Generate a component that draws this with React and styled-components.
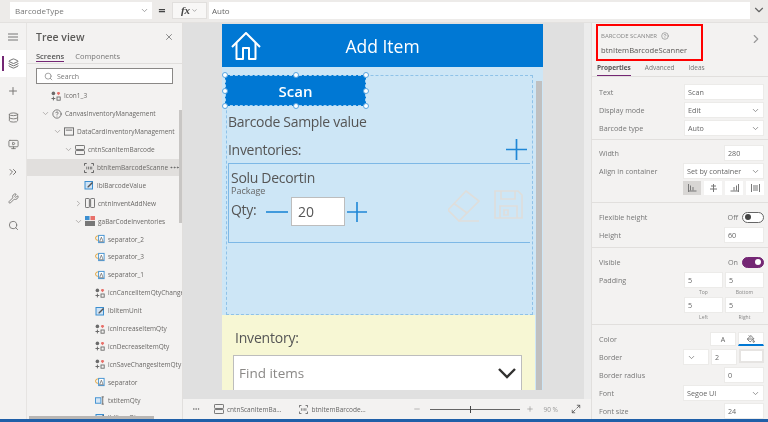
import React from 'react'
import styled, { createGlobalStyle } from 'styled-components'
import { Plus, Minus, X, ChevronDown, ChevronRight, Search, Database, Layers, CircleHelp, MoreHorizontal, Maximize2, Wrench, ChevronsRight, MonitorPlay, PaintBucket } from 'lucide-react'

const Global = createGlobalStyle`
    html, body { margin: 0; padding: 0; background: #f3f2f1; overflow: hidden; }
    * { box-sizing: border-box; }
`

const Page = styled.div`
    width: 768px;
    height: 422px;
    display: flex;
    flex-direction: column;
    overflow: hidden;
    font-family: "Open Sans", "Noto Sans", sans-serif;
    color: #605e5c;
    background: #f3f2f1;
    filter: blur(0.35px);
`

// FORMULA BAR
const TopBar = styled.div`
    height: 23px;
    flex: none;
    display: flex;
    align-items: center;
    padding: 0 0 2px 10px;
    background: #edebe9;
    border-bottom: 1px solid #e3e1df;
`
const PropSelect = styled.div`
    width: 142px;
    height: 17px;
    display: flex;
    align-items: center;
    justify-content: space-between;
    padding: 0 3px 0 5px;
    background: #fff;
    font-size: 8px;
    color: #777;
`
const Equals = styled.div`
    width: 20px;
    text-align: center;
    font-size: 13px;
    font-weight: 600;
    color: #444;
`
const FxBox = styled.div`
    width: 35px;
    height: 17px;
    display: flex;
    align-items: center;
    justify-content: center;
    gap: 1px;
    background: #f8f7f6;
    border: 1px solid #e1dfdd;
    font-family: "Liberation Serif", serif;
    font-style: italic;
    font-weight: 700;
    font-size: 11px;
    color: #444;
`
const FormulaInput = styled.div`
    width: 541px;
    height: 17px;
    margin-left: 2px;
    display: flex;
    align-items: center;
    padding-left: 3px;
    background: #fff;
    font-size: 8px;
    color: #666;
`
const BarChevron = styled.div`
    flex: 1;
    display: flex;
    justify-content: center;
    color: #666;
`

const Main = styled.div`
    flex: 1;
    min-height: 0;
    display: flex;
`

// LEFT RAIL
const Rail = styled.div`
    width: 27px;
    flex: none;
    display: flex;
    flex-direction: column;
    background: #f3f2f1;
    border-right: 1px solid #e6e4e2;
`
const RailItem = styled.div`
    position: relative;
    height: 27px;
    display: flex;
    align-items: center;
    justify-content: center;
    color: #7a7876;
    background: ${p => (p.$active ? '#fff' : 'transparent')};
    &::before {
        content: '';
        display: ${p => (p.$active ? 'block' : 'none')};
        position: absolute;
        left: 2px;
        top: 6px;
        bottom: 6px;
        width: 2px;
        background: #742774;
    }
`

// TREE VIEW
const TreePanel = styled.div`
    position: relative;
    width: 156px;
    flex: none;
    display: flex;
    flex-direction: column;
    overflow: hidden;
    background: #f3f2f1;
    border-right: 1px solid #e1dfdd;
`
const TreeHead = styled.div`
    height: 24px;
    flex: none;
    display: flex;
    align-items: center;
    justify-content: space-between;
    padding: 4px 8px 0 9px;
    font-size: 10.5px;
    font-weight: 600;
    color: #5b5a58;
`
const TreeTabs = styled.div`
    height: 17px;
    flex: none;
    display: flex;
    gap: 11px;
    padding: 2px 0 0 9px;
    border-bottom: 1px solid #e1dfdd;
`
const TreeTab = styled.div`
    height: 13px;
    font-size: 7.5px;
    line-height: 14px;
    font-weight: ${p => (p.$active ? 600 : 400)};
    color: ${p => (p.$active ? '#555' : '#777')};
    border-bottom: ${p => (p.$active ? '1px solid #742774' : 'none')};
`
const SearchBox = styled.div`
    height: 16px;
    flex: none;
    margin: 4px 9px 3px 9px;
    display: flex;
    align-items: center;
    gap: 4px;
    padding-left: 7px;
    background: #fff;
    border: 1px solid #8a8886;
    font-size: 7px;
    color: #777;
`
const TreeList = styled.div`
    flex: 1;
    min-height: 0;
    overflow: hidden;
`
const TreeRow = styled.div`
    position: relative;
    height: 17.9px;
    display: flex;
    align-items: center;
    gap: 3px;
    padding-left: ${p => p.$indent}px;
    font-size: 6.5px;
    white-space: nowrap;
    color: #6a6866;
    background: ${p => (p.$selected ? '#e1dfdd' : 'transparent')};
    svg { flex: none; }
`
const Caret = styled.span`
    width: 8px;
    flex: none;
    display: flex;
    color: #a09e9c;
`
const RowDots = styled.span`
    position: absolute;
    right: 2px;
    top: 3px;
    padding-left: 1px;
    display: flex;
    color: #666;
    background: #e1dfdd;
`
const VScroll = styled.div`
    position: absolute;
    right: 0;
    top: 87px;
    width: 3px;
    height: 113px;
    background: #c8c6c4;
`
const HScroll = styled.div`
    position: absolute;
    left: 2px;
    bottom: 0;
    width: 125px;
    height: 3px;
    background: #b8b6b4;
`

// CENTER
const Center = styled.div`
    flex: 1;
    min-width: 0;
    display: flex;
    flex-direction: column;
`
const CanvasArea = styled.div`
    position: relative;
    flex: 1;
    min-height: 0;
    overflow: hidden;
    padding: 1px 0 0 39px;
    background: #e0e0e0;
    border-right: 7px solid #ececec;
`
const Screen = styled.div`
    width: 321px;
    height: 366px;
    display: flex;
    flex-direction: column;
`
const AppHeader = styled.div`
    position: relative;
    height: 43px;
    flex: none;
    display: flex;
    align-items: center;
    justify-content: center;
    background: #0078d4;
    color: #fff;
    font-size: 17.5px;
`
const HomeIcon = styled.svg`
    position: absolute;
    left: 9px;
    top: 8px;
`
const AppBody = styled.div`
    flex: 1;
    min-height: 0;
    display: flex;
    width: 100%;
`
const AppColumn = styled.div`
    width: 313px;
    display: flex;
    flex-direction: column;
`
const BlueArea = styled.div`
    height: 248px;
    flex: none;
    padding: 8px 2px 0 4px;
    background: #cde6f6;
`
const Container = styled.div`
    height: 100%;
    display: flex;
    flex-direction: column;
    border: 1px dashed #8fc2e8;
`
const ScanWrap = styled.div`
    position: relative;
    width: 141px;
    height: 31px;
    margin-left: -2px;
    margin-top: -1px;
    flex: none;
`
const ScanButton = styled.div`
    height: 100%;
    display: flex;
    align-items: center;
    justify-content: center;
    background: #0078d4;
    border: 1px dashed #a9d3f2;
    color: #fff;
    font-size: 15px;
    font-weight: 600;
`
const Handle = styled.span`
    position: absolute;
    left: ${p => p.$x}%;
    top: ${p => p.$y}%;
    width: 6px;
    height: 6px;
    margin: -3px 0 0 -3px;
    border-radius: 50%;
    background: #fff;
    border: 1px solid #5aa5e0;
`
const SampleText = styled.div`
    margin: 6px 0 0 1px;
    font-size: 14px;
    letter-spacing: -0.3px;
    line-height: 20px;
    color: #555;
`
const InventHead = styled.div`
    height: 28px;
    flex: none;
    margin-top: 3px;
    display: flex;
    align-items: center;
    justify-content: space-between;
    padding: 0 5px 0 1px;
    font-size: 14px;
    letter-spacing: -0.3px;
    color: #555;
`
const Gallery = styled.div`
    position: relative;
    height: 80px;
    flex: none;
    margin: 0 2px 0 1px;
    padding: 6px 0 0 2px;
    border-top: 1px solid #7db8e6;
    border-left: 1px solid #7db8e6;
    border-bottom: 1px solid #7db8e6;
`
const ItemName = styled.div`
    font-size: 14px;
    letter-spacing: -0.3px;
    line-height: 15px;
    color: #555;
`
const ItemUnit = styled.div`
    margin-top: 1px;
    font-size: 9px;
    line-height: 9px;
    color: #666;
`
const QtyRow = styled.div`
    display: flex;
    align-items: center;
    margin-top: 2px;
`
const QtyLabel = styled.span`
    width: 35px;
    font-size: 14px;
    letter-spacing: -0.3px;
    padding-bottom: 4px;
    color: #555;
`
const QtyInput = styled.div`
    width: 54px;
    height: 29px;
    margin: 0 2px 0 3px;
    display: flex;
    align-items: center;
    padding-left: 6px;
    background: #fff;
    border: 1px solid #bdbdbd;
    font-size: 14px;
    color: #555;
`
const FadedIcons = styled.div`
    position: absolute;
    right: 7px;
    top: 26px;
    display: flex;
    align-items: flex-start;
    gap: 14px;
    color: #dfdedb;
`
const YellowArea = styled.div`
    flex: 1;
    min-height: 0;
    overflow: hidden;
    padding: 13px 13px 0 11px;
    background: #f7f7d4;
`
const InventoryLabel = styled.div`
    padding-left: 2px;
    font-size: 14px;
    letter-spacing: -0.2px;
    line-height: 20px;
    color: #555;
`
const FindBox = styled.div`
    height: 36px;
    margin-top: 7px;
    display: flex;
    align-items: center;
    justify-content: space-between;
    padding: 0 3px 0 5px;
    background: #fff;
    border: 1px solid #bdbdbd;
    font-size: 13.5px;
    color: #8a8886;
`
const ScreenScroll = styled.div`
    width: 8px;
    display: flex;
    flex-direction: column;
    padding: 8px 1px 0;
    background: #cde6f6;
`
const ScrollThumb = styled.div`
    flex: 1;
    background: #c0c0c0;
    margin-top: 6px;
`
const OuterScroll = styled.div`
    position: absolute;
    right: -6px;
    top: 2px;
    bottom: 2px;
    display: flex;
    flex-direction: column;
    justify-content: space-between;
    font-size: 5px;
    color: #555;
`

// STATUS BAR
const StatusBar = styled.div`
    height: 20px;
    flex: none;
    display: flex;
    align-items: center;
    padding-left: 9px;
    background: #f3f2f1;
    font-size: 6.5px;
    color: #666;
`
const Crumb = styled.div`
    display: flex;
    align-items: center;
    gap: 3px;
    margin-left: ${p => p.$gap}px;
    white-space: nowrap;
`
const ZoomGroup = styled.div`
    margin-left: auto;
    display: flex;
    align-items: center;
    padding-right: 10px;
    color: #999;
`
const SliderTrack = styled.div`
    position: relative;
    width: 90px;
    height: 1px;
    margin: 0 6px 0 9px;
    background: #666;
    &::after {
        content: '';
        position: absolute;
        left: 40px;
        top: -3px;
        width: 1px;
        height: 7px;
        background: #444;
    }
`
const ZoomText = styled.span`
    margin: 0 13px 0 10px;
    font-size: 6.5px;
`
const TaskStrip = styled.div`
    height: 3px;
    flex: none;
    background: #1f5fa8;
`

// PROPERTIES
const PropsPanel = styled.div`
    width: 177px;
    flex: none;
    display: flex;
    flex-direction: column;
    overflow: hidden;
    background: #f3f2f1;
    border-left: 1px solid #e1dfdd;
`
const PropsHead = styled.div`
    position: relative;
    height: 40px;
    flex: none;
    padding: 1px 0 0 4px;
`
const RedBox = styled.div`
    width: 107px;
    height: 37px;
    padding: 5px 0 0 3px;
    border: 2px solid #f00;
`
const TypeLine = styled.div`
    display: flex;
    align-items: center;
    gap: 4px;
    font-size: 6px;
    line-height: 10px;
    color: #888;
`
const NameLine = styled.div`
    margin-top: 4px;
    font-size: 7.6px;
    line-height: 10px;
    color: #5a5856;
`
const HeadChevron = styled(ChevronRight)`
    position: absolute;
    right: 5px;
    top: 9px;
    color: #999;
`
const PropTabs = styled.div`
    height: 14px;
    flex: none;
    display: flex;
    gap: 14px;
    padding-left: 5px;
    border-bottom: 1px solid #e1dfdd;
`
const PropTab = styled.div`
    height: 13px;
    font-size: 6.5px;
    line-height: 10px;
    font-weight: ${p => (p.$active ? 700 : 400)};
    color: ${p => (p.$active ? '#555' : '#777')};
    border-bottom: ${p => (p.$active ? '1px solid #742774' : 'none')};
`
const Section = styled.div`
    flex: none;
    height: ${p => p.$height}px;
    padding: ${p => p.$top}px 4px 0 7px;
    border-bottom: ${p => (p.$last ? 'none' : '1px solid #e1dfdd')};
`
const Row = styled.div`
    height: 18px;
    display: flex;
    align-items: center;
    justify-content: space-between;
    font-size: 7.2px;
    color: #777;
`
const Field = styled.div`
    width: ${p => p.$w}px;
    height: 16px;
    display: flex;
    align-items: center;
    justify-content: space-between;
    padding: 0 3px 0 3px;
    background: #fff;
    border: 1px solid #ecebe9;
    font-size: 7.2px;
    color: #666;
`
const Fields = styled.div`
    display: flex;
    gap: 2px;
`
const AlignRow = styled.div`
    display: flex;
    justify-content: flex-end;
    gap: 3px;
    padding-top: 1px;
`
const AlignButton = styled.div`
    width: 18px;
    height: 14px;
    display: flex;
    align-items: center;
    justify-content: center;
    background: ${p => (p.$active ? '#d8d6d4' : '#fff')};
    color: #777;
`
const Toggle = styled.div`
    width: 22px;
    height: 11px;
    padding: 1px 2px;
    display: flex;
    justify-content: ${p => (p.$on ? 'flex-end' : 'flex-start')};
    align-items: center;
    border-radius: 6px;
    background: ${p => (p.$on ? '#742774' : '#fff')};
    border: 1px solid ${p => (p.$on ? '#742774' : '#666')};
    &::after {
        content: '';
        width: 6px;
        height: 6px;
        border-radius: 50%;
        background: ${p => (p.$on ? '#fff' : '#444')};
    }
`
const ToggleSet = styled.div`
    display: flex;
    align-items: center;
    gap: 4px;
`
const SmallCaps = styled.div`
    height: ${p => p.$h}px;
    display: flex;
    justify-content: flex-end;
    gap: 2px;
    font-size: 5px;
    line-height: 7px;
    color: #888;
`
const SmallCap = styled.span`
    width: 39px;
    text-align: center;
`
const ColorCell = styled.div`
    width: 26px;
    height: 14px;
    display: flex;
    flex-direction: column;
    align-items: center;
    justify-content: center;
    background: #fff;
    border: 1px solid #ecebe9;
    font-size: 7px;
    color: #666;
    border-bottom: ${p => (p.$bar ? '2px solid #0078d4' : '1px solid #ecebe9')};
`
const Swatch = styled.div`
    width: 25px;
    height: 14px;
    background: #fff;
    border: 2px solid #e6e4e2;
`

// DRAWINGS
const LinePlus = ({ size }) => (
    <svg width={size} height={size} viewBox="0 0 20 20" fill="none" stroke="#1f87d6" strokeWidth="1.6" style={{ flex: 'none' }}>
        <path d="M10 0v20M0 10h20" />
    </svg>
)
const LineMinus = () => (
    <svg width="22" height="4" viewBox="0 0 22 4" stroke="#1f87d6" strokeWidth="1.6" style={{ flex: 'none' }}>
        <path d="M0 2h22" />
    </svg>
)
const EraserIcon = () => (
    <svg width="32" height="32" viewBox="0 0 32 32" fill="none" stroke="currentColor" strokeWidth="1.6">
        <path d="M18 1 31 11 11 31 0 20z" />
        <path d="M6 13.5 19 23M11 31h20" />
    </svg>
)
const SaveIcon = () => (
    <svg width="29" height="29" viewBox="0 0 29 29" fill="none" stroke="currentColor" strokeWidth="1.6">
        <path d="M1 1h23l4 4v23H1z" />
        <path d="M7 1v8h14V1M6 28V16h17v12M10 20h4v5h-4z" />
    </svg>
)
const ChevronBig = () => (
    <svg width="18" height="11" viewBox="0 0 18 11" fill="none" stroke="#323130" strokeWidth="2.4" style={{ marginRight: 2 }}>
        <path d="M1 1l8 8 8-8" />
    </svg>
)
const AlignIcon = ({ d }) => (
    <svg width="9" height="8" viewBox="0 0 9 8" fill="none" stroke="#777">
        <path d={d} />
    </svg>
)
const IconGrid = () => (
    <svg width="10" height="10" viewBox="0 0 10 10" fill="none">
        <circle cx="2.4" cy="2.4" r="1.8" fill="#6b6b6b" />
        <path d="M7.5 4.2 5.8 2.4 6.6 .9h1.8l.8 1.5z" fill="#e8706a" />
        <path d="M2.4 5.6v3.8M.5 7.5h3.8" stroke="#6b6b6b" strokeWidth="1" />
        <rect x="6" y="6" width="3.2" height="3.2" stroke="#6b6b6b" strokeWidth=".9" />
    </svg>
)
const LabelIcon = () => (
    <svg width="10" height="10" viewBox="0 0 10 10" fill="none">
        <rect x="1" y="1.5" width="7.5" height="7.5" fill="#cfe3f5" stroke="#3b8ed0" />
        <path d="M3.5 6.5 8 2l1 1-4.5 4.5H3.5z" fill="#555" />
    </svg>
)
const ShapeIcon = () => (
    <svg width="10" height="10" viewBox="0 0 11 10" fill="none">
        <circle cx="3" cy="4" r="2.4" stroke="#e0a030" />
        <rect x="4" y="1" width="6" height="8" fill="#fff" stroke="#3b8ed0" />
        <path d="M7 3 5 8h4z" stroke="#666" strokeWidth=".8" />
    </svg>
)
const ScanIcon = ({ size = 10 }) => (
    <svg width={size} height={size} viewBox="0 0 11 11" fill="none" stroke="#555">
        <path d="M.5 3V.5H3M8 .5h2.5V3M.5 8v2.5H3M8 10.5h2.5V8" />
        <path d="M3 4v3M5 4v3M7 4v3M8.5 4v3" strokeWidth=".8" />
    </svg>
)
const StackIcon = ({ size = 10 }) => (
    <svg width={size} height={size} viewBox="0 0 11 11" fill="none" stroke="#666">
        <rect x=".5" y=".5" width="10" height="4.4" rx=".8" />
        <rect x=".5" y="6.1" width="10" height="4.4" rx=".8" />
    </svg>
)
const ColumnsIcon = () => (
    <svg width="10" height="10" viewBox="0 0 11 11" fill="none" stroke="#666">
        <rect x=".5" y=".5" width="4.3" height="10" rx=".8" />
        <rect x="6.2" y=".5" width="4.3" height="10" rx=".8" />
    </svg>
)
const GalleryIcon = () => (
    <svg width="10" height="10" viewBox="0 0 11 11">
        <rect x="0" y="0" width="5" height="4.5" fill="#3b8ed0" />
        <rect x="6" y="0" width="5" height="4.5" fill="#e8706a" />
        <rect x="0" y="5.5" width="11" height="5.5" fill="#777" />
    </svg>
)
const CardIcon = () => (
    <svg width="10" height="9" viewBox="0 0 11 9" fill="none" stroke="#666">
        <rect x=".5" y=".5" width="10" height="8" />
        <path d="M2 3h7" />
    </svg>
)
const TextInputIcon = () => (
    <svg width="10" height="9" viewBox="0 0 11 9" fill="none" stroke="#666">
        <rect x=".5" y="1.5" width="6" height="6" fill="#d5e6f5" stroke="#3b8ed0" />
        <path d="M8.5.5v8M7.3.5h2.4M7.3 8.5h2.4" />
    </svg>
)

const treeRows = [
    { name: 'Icon1_3', indent: 24, icon: <IconGrid /> },
    { name: 'CanvasInventoryManagement', indent: 14, caret: 'down', icon: <CircleHelp size={10} color="#666" /> },
    { name: 'DataCardInventoryManagement', indent: 26, caret: 'down', icon: <CardIcon /> },
    { name: 'cntnScanItemBarcode', indent: 37, caret: 'down', icon: <StackIcon /> },
    { name: 'btnItemBarcodeScanne', indent: 57, icon: <ScanIcon />, selected: true },
    { name: 'lblBarcodeValue', indent: 57, icon: <LabelIcon /> },
    { name: 'cntnInventAddNew', indent: 47, caret: 'right', icon: <ColumnsIcon /> },
    { name: 'gaBarCodeInventories', indent: 47, caret: 'down', icon: <GalleryIcon /> },
    { name: 'separator_2', indent: 68, icon: <ShapeIcon /> },
    { name: 'separator_3', indent: 68, icon: <ShapeIcon /> },
    { name: 'separator_1', indent: 68, icon: <ShapeIcon /> },
    { name: 'icnCancelItemQtyChange', indent: 68, icon: <IconGrid /> },
    { name: 'lblItemUnit', indent: 68, icon: <LabelIcon /> },
    { name: 'icnIncreaseItemQty', indent: 68, icon: <IconGrid /> },
    { name: 'icnDecreaseItemQty', indent: 68, icon: <IconGrid /> },
    { name: 'icnSaveChangesItemQty', indent: 68, icon: <IconGrid /> },
    { name: 'separator', indent: 68, icon: <ShapeIcon /> },
    { name: 'txtItemQty', indent: 68, icon: <TextInputIcon /> },
    { name: 'lblItemQty', indent: 68, icon: <LabelIcon /> },
]

const handles = [[0, 0], [50, 0], [100, 0], [0, 50], [100, 50], [0, 100], [50, 100], [100, 100]]

const alignIcons = [
    'M.5 0v8M2.5 1.5v5M5 3v3.5M.5 7h8',
    'M4.5 0v8M2 2h5M1 5h7',
    'M8.5 0v8M6.5 1.5v5M4 3v3.5M.5 7h8',
    'M.5 0v8M8.5 0v8M2 2h5M2 4h5M2 6h5',
]

const TreeItem = ({ row }) => (
    <TreeRow $indent={row.indent} $selected={row.selected}>
        {row.caret && (
            <Caret>
                {row.caret === 'down' ? <ChevronDown size={9} /> : <ChevronRight size={9} />}
            </Caret>
        )}
        {row.icon}
        <span>{row.name}</span>
        {row.selected && <RowDots><MoreHorizontal size={11} /></RowDots>}
    </TreeRow>
)

const SelectField = ({ w, children }) => (
    <Field $w={w}>
        {children}
        <ChevronDown size={9} color="#777" />
    </Field>
)

const App = () => {
    return (
        <Page>
            <Global />
            <TopBar>
                <PropSelect>BarcodeType<ChevronDown size={9} color="#888" /></PropSelect>
                <Equals>=</Equals>
                <FxBox>fx<ChevronDown size={7} color="#777" /></FxBox>
                <FormulaInput>Auto</FormulaInput>
                <BarChevron><ChevronDown size={14} /></BarChevron>
            </TopBar>
            <Main>
                <Rail>
                    <RailItem>
                        <svg width="10" height="8" viewBox="0 0 10 8" stroke="#777"><path d="M0 1h10M0 4h10M0 7h10" /></svg>
                    </RailItem>
                    <RailItem $active><Layers size={11} color="#666" /></RailItem>
                    <RailItem><Plus size={12} /></RailItem>
                    <RailItem><Database size={11} /></RailItem>
                    <RailItem><MonitorPlay size={11} /></RailItem>
                    <RailItem><ChevronsRight size={12} /></RailItem>
                    <RailItem><Wrench size={11} /></RailItem>
                    <RailItem><Search size={11} /></RailItem>
                </Rail>
                <TreePanel>
                    <TreeHead>Tree view<X size={10} color="#777" /></TreeHead>
                    <TreeTabs>
                        <TreeTab $active>Screens</TreeTab>
                        <TreeTab>Components</TreeTab>
                    </TreeTabs>
                    <SearchBox><Search size={9} color="#888" />Search</SearchBox>
                    <TreeList>
                        {treeRows.map(row => <TreeItem key={row.name} row={row} />)}
                    </TreeList>
                    <VScroll />
                    <HScroll />
                </TreePanel>
                <Center>
                    <CanvasArea>
                        <Screen>
                            <AppHeader>
                                <HomeIcon width="30" height="28" viewBox="0 0 30 28" fill="none" stroke="#fff" strokeWidth="2" strokeLinejoin="round">
                                    <path d="M1 15 15 1l14 14" />
                                    <path d="M5.5 11v16H12V16h6v11h6.5V11" />
                                </HomeIcon>
                                Add Item
                            </AppHeader>
                            <AppBody>
                                <AppColumn>
                                    <BlueArea>
                                        <Container>
                                            <ScanWrap>
                                                <ScanButton>Scan</ScanButton>
                                                {handles.map(([x, y]) => <Handle key={`${x}-${y}`} $x={x} $y={y} />)}
                                            </ScanWrap>
                                            <SampleText>Barcode Sample value</SampleText>
                                            <InventHead>
                                                Inventories:
                                                <LinePlus size={21} />
                                            </InventHead>
                                            <Gallery>
                                                <ItemName>Solu Decortin</ItemName>
                                                <ItemUnit>Package</ItemUnit>
                                                <QtyRow>
                                                    <QtyLabel>Qty:</QtyLabel>
                                                    <LineMinus />
                                                    <QtyInput>20</QtyInput>
                                                    <LinePlus size={20} />
                                                </QtyRow>
                                                <FadedIcons>
                                                    <EraserIcon />
                                                    <SaveIcon />
                                                </FadedIcons>
                                            </Gallery>
                                        </Container>
                                    </BlueArea>
                                    <YellowArea>
                                        <InventoryLabel>Inventory:</InventoryLabel>
                                        <FindBox>
                                            Find items
                                            <ChevronBig />
                                        </FindBox>
                                    </YellowArea>
                                </AppColumn>
                                <ScreenScroll><ScrollThumb /></ScreenScroll>
                            </AppBody>
                        </Screen>
                        <OuterScroll>
                            <span>▲</span>
                            <span>▼</span>
                        </OuterScroll>
                    </CanvasArea>
                    <StatusBar>
                        <MoreHorizontal size={8} />
                        <Crumb $gap={14}><StackIcon size={10} />cntnScanItemBa...</Crumb>
                        <Crumb $gap={18}><ScanIcon size={9} />btnItemBarcode...</Crumb>
                        <ZoomGroup>
                            <Minus size={8} />
                            <SliderTrack />
                            <Plus size={8} />
                            <ZoomText>90 %</ZoomText>
                            <Maximize2 size={10} color="#555" />
                        </ZoomGroup>
                    </StatusBar>
                </Center>
                <PropsPanel>
                    <PropsHead>
                        <RedBox>
                            <TypeLine>BARCODE SCANNER<CircleHelp size={8} /></TypeLine>
                            <NameLine>btnItemBarcodeScanner</NameLine>
                        </RedBox>
                        <HeadChevron size={14} />
                    </PropsHead>
                    <PropTabs>
                        <PropTab $active>Properties</PropTab>
                        <PropTab>Advanced</PropTab>
                        <PropTab>Ideas</PropTab>
                    </PropTabs>
                    <Section $height={63} $top={6}>
                        <Row>Text<Field $w={80}>Scan</Field></Row>
                        <Row>Display mode<SelectField w={80}>Edit</SelectField></Row>
                        <Row>Barcode type<SelectField w={80}>Auto</SelectField></Row>
                    </Section>
                    <Section $height={63} $top={4}>
                        <Row>Width<Field $w={40}>280</Field></Row>
                        <Row>Align in container<SelectField w={81}>Set by container</SelectField></Row>
                        <AlignRow>
                            {alignIcons.map((d, i) => (
                                <AlignButton key={d} $active={i === 0}><AlignIcon d={d} /></AlignButton>
                            ))}
                        </AlignRow>
                    </Section>
                    <Section $height={45} $top={5}>
                        <Row>Flexible height<ToggleSet>Off<Toggle /></ToggleSet></Row>
                        <Row>Height<Field $w={40}>60</Field></Row>
                    </Section>
                    <Section $height={77} $top={5}>
                        <Row>Visible<ToggleSet>On<Toggle $on /></ToggleSet></Row>
                        <Row>Padding<Fields><Field $w={39}>5</Field><Field $w={39}>5</Field></Fields></Row>
                        <SmallCaps $h={7}><SmallCap>Top</SmallCap><SmallCap>Bottom</SmallCap></SmallCaps>
                        <Row><span /><Fields><Field $w={39}>5</Field><Field $w={39}>5</Field></Fields></Row>
                        <SmallCaps $h={7}><SmallCap>Left</SmallCap><SmallCap>Right</SmallCap></SmallCaps>
                    </Section>
                    <Section $height={96} $top={5} $last>
                        <Row>Color<Fields><ColorCell>A</ColorCell><ColorCell $bar><PaintBucket size={8} color="#444" /></ColorCell></Fields></Row>
                        <Row>Border<Fields><SelectField w={26}> </SelectField><Field $w={26}>2</Field><Swatch /></Fields></Row>
                        <Row>Border radius<Field $w={40}>0</Field></Row>
                        <Row>Font<SelectField w={81}>Segoe UI</SelectField></Row>
                        <Row>Font size<Field $w={40}>24</Field></Row>
                    </Section>
                </PropsPanel>
            </Main>
            <TaskStrip />
        </Page>
    )
}

export default App
